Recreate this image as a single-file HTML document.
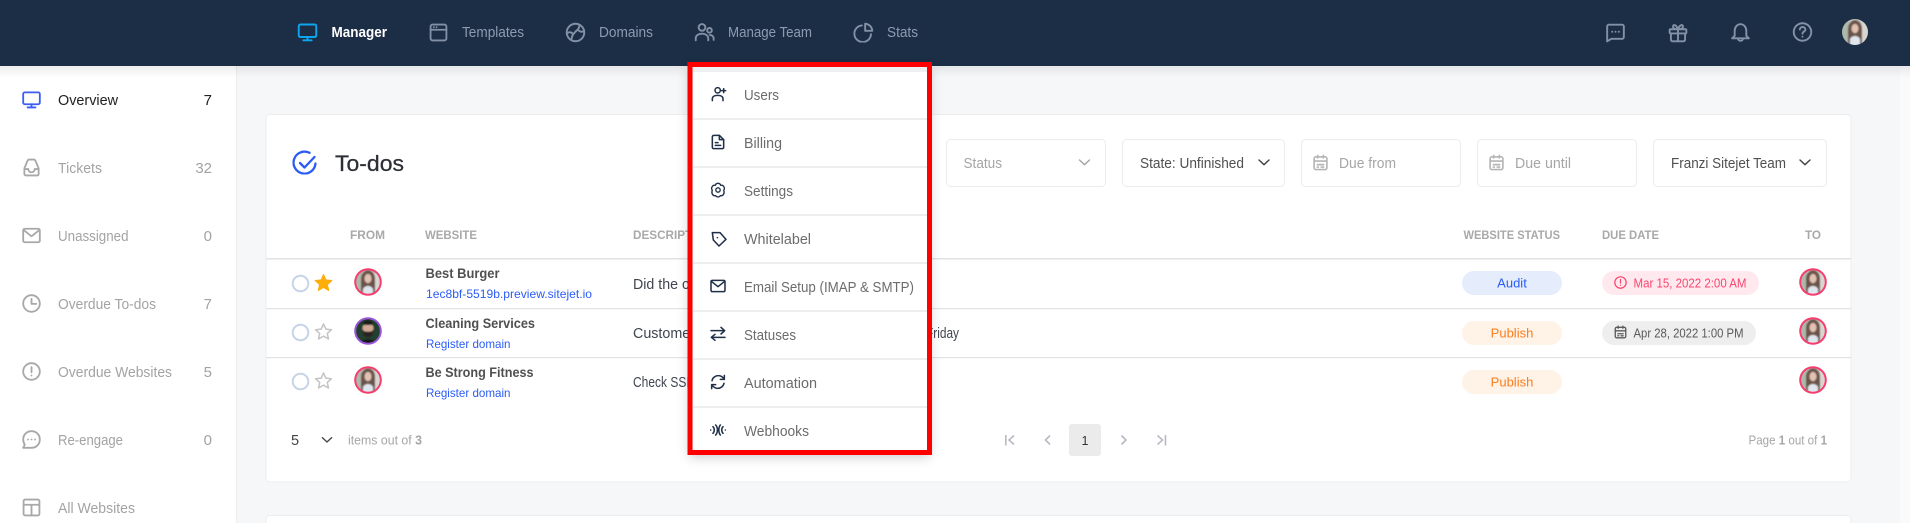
<!DOCTYPE html>
<html lang="en">
<head>
<meta charset="utf-8">
<title>To-dos</title>
<style>
html,body{margin:0;padding:0;background:#f6f7f9;width:1910px;height:523px;overflow:hidden}
svg{display:block}
text{font-family:"Liberation Sans",sans-serif;font-size:14px}
.nav{fill:#8c9bb0;font-size:14.5px}
.side{fill:#a3a3a3;font-size:15px}
.th{fill:#a9a9a9;font-size:11.5px;font-weight:bold}
.name{fill:#505050;font-size:14px;font-weight:bold}
.link{fill:#2a5cf5;font-size:12px}
.desc{fill:#3f4550;font-size:14.5px}
.menu{fill:#6c6c6c;font-size:14.5px}
.ph{fill:#a6a6a6;font-size:14.5px}
.val{fill:#505050;font-size:14.5px}
.ic{fill:none;stroke:currentColor;stroke-width:2.3;stroke-linecap:round;stroke-linejoin:round}
</style>
</head>
<body>
<svg xmlns="http://www.w3.org/2000/svg" width="1910" height="523" viewBox="0 0 1910 523">
<defs>
<linearGradient id="hs" x1="0" y1="0" x2="0" y2="1"><stop offset="0" stop-color="#000" stop-opacity=".07"/><stop offset="1" stop-color="#000" stop-opacity="0"/></linearGradient>
<filter id="soft" x="-20%" y="-20%" width="140%" height="140%"><feGaussianBlur stdDeviation=".7"/></filter>
<clipPath id="c27"><circle cx="0" cy="0" r="11.8"/></clipPath>
<clipPath id="c26"><circle cx="0" cy="0" r="13"/></clipPath>
<g id="woman">
<g filter="url(#soft)">
<rect x="-15" y="-15" width="30" height="30" fill="#c9cac6"/>
<rect x="-15" y="-15" width="9" height="30" fill="#aeb8ab"/>
<rect x="7" y="-15" width="8" height="30" fill="#d9d6d2"/>
<path d="M-7 14V-3C-7-9-3-12 0-12S7-9 7-3V14Z" fill="#6b5248"/>
<ellipse cx="0" cy="-3.500" rx="3.500" ry="4.600" fill="#e2c3b3"/>
<path d="M-5 15V7C-3 3 3 3 5 7V15Z" fill="#dfe6ee"/>
</g>
</g>
<g id="man">
<g filter="url(#soft)">
<rect x="-15" y="-15" width="30" height="30" fill="#24402f"/>
<path d="M-10 15C-9 6 9 6 10 15Z" fill="#15181c"/>
<ellipse cx="0" cy="-2" rx="5.500" ry="7" fill="#d3ab96"/>
<path d="M-5.500-7C-4-12 4-12 5.500-7L4-6H-4Z" fill="#1a1a1a"/>
<path d="M-5.500-2C-4 1-2 .5 0 .5S4 1 5.500-2C5.500 5 2 6.500 0 6.500S-5.500 5-5.500-2Z" fill="#2a2320"/>
</g>
</g>
<g id="av1"><circle r="13.800" fill="#f73d6d"/><g clip-path="url(#c27)"><use href="#woman"/></g></g>
<g id="av2"><circle r="13.800" fill="#9a55d8"/><g clip-path="url(#c27)"><use href="#man"/></g></g>
<symbol id="i-mon" viewBox="0 0 24 24"><g class="ic"><rect x="1.500" y="3" width="21" height="15" rx="2"/><path d="M7 22H17M12 18V22"/></g></symbol>
<symbol id="i-tmpl" viewBox="0 0 24 24"><g class="ic"><rect x="2" y="2" width="20" height="20" rx="2.500"/><path d="M2 8.500H22"/><path d="M6 5.300H6.100M9.500 5.300H9.600" /></g></symbol>
<symbol id="i-globe" viewBox="0 0 24 24"><g class="ic"><circle cx="12" cy="12" r="10.500"/><path d="M17 3C16 8 15 8 12 11S8 15 7 21"/><path d="M2 13C4 11 7 11 9 14M15 9C17 11 20 12 22 10"/></g></symbol>
<symbol id="i-team" viewBox="0 0 24 24"><g class="ic"><circle cx="9" cy="6.500" r="4"/><path d="M1.500 22V19.500C1.500 16 5 14 9 14S16.500 16 16.500 19.500V22"/><circle cx="18" cy="10" r="2.800"/><path d="M18.500 15.500C21 15.700 23 17.500 23 20V21.500"/></g></symbol>
<symbol id="i-pie" viewBox="0 0 24 24"><g class="ic"><path d="M10 3.500A10 10 0 1 0 21 14"/><path d="M14 1.500A9 9 0 0 1 22.500 10H14Z"/></g></symbol>
<symbol id="i-inbox" viewBox="0 0 24 24"><g class="ic"><path d="M3 13L7 3.500C7.500 2.500 8 2 9 2H15C16 2 16.500 2.500 17 3.500L21 13V20C21 21.500 20 22 19 22H5C4 22 3 21.500 3 20Z"/><path d="M3 14H8C8 17 10 18 12 18S16 17 16 14H21"/></g></symbol>
<symbol id="i-mail" viewBox="0 0 24 24"><g class="ic"><rect x="1.500" y="3.500" width="21" height="17" rx="2"/><path d="M2 5L12 13L22 5"/></g></symbol>
<symbol id="i-clock" viewBox="0 0 24 24"><g class="ic"><circle cx="12" cy="12" r="10.500"/><path d="M12 6V12.500H18"/></g></symbol>
<symbol id="i-alert" viewBox="0 0 24 24"><g class="ic"><circle cx="12" cy="12" r="10.500"/><path d="M12 6.500V13M12 17V17.100"/></g></symbol>
<symbol id="i-chat" viewBox="0 0 24 24"><g class="ic"><path d="M12 1.500C18 1.500 22.500 6 22.500 12S18 22.500 12 22.500H1.500L3.500 18.500C2.200 16.500 1.500 14.500 1.500 12C1.500 6 6 1.500 12 1.500Z"/><path d="M7.500 12H7.600M12 12H12.100M16.500 12H16.600"/></g></symbol>
<symbol id="i-chat2" viewBox="0 0 24 24"><g class="ic"><path d="M2 4C2 3 3 2 4 2H20C21 2 22 3 22 4V17C22 18 21 19 20 19H7L2 22Z"/><path d="M8 10.500H8.100M12 10.500H12.100M16 10.500H16.100"/></g></symbol>
<symbol id="i-layout" viewBox="0 0 24 24"><g class="ic"><rect x="2" y="2" width="20" height="20" rx="2"/><path d="M2 8.500H22M12 8.500V22"/></g></symbol>
<symbol id="i-cal" viewBox="0 0 24 24"><g class="ic"><rect x="3" y="4" width="18" height="18" rx="2.500"/><path d="M3 10H21M8 2V5.500M16 2V5.500M7.500 15H16.500M7.500 18.500H9M13 18.500H16.500" /></g></symbol>
<symbol id="i-gift" viewBox="0 0 24 24"><g class="ic"><rect x="2" y="7.500" width="20" height="5" rx="1"/><path d="M3.500 12.500V20C3.500 21 4.500 22 5.500 22H18.500C19.500 22 20.500 21 20.500 20V12.500M12 7.500V22"/><path d="M12 7.500C10 2 6 1 6 4.500C6 6.500 8 7.500 12 7.500C16 7.500 18 6.500 18 4.500C18 1 14 2 12 7.500Z"/></g></symbol>
<symbol id="i-bell" viewBox="0 0 24 24"><g class="ic"><path d="M5 16V10C5 5.500 8 2 12 2S19 5.500 19 10V16L22 19H2Z"/><path d="M9 19C9 23 15 23 15 19"/></g></symbol>
<symbol id="i-help" viewBox="0 0 24 24"><g class="ic"><circle cx="12" cy="12" r="10.500"/><path d="M8.800 9C9 7 10.500 6 12 6C14 6 15.500 7.200 15.500 9C15.500 11.500 12 11.500 12 14M12 17.500V17.600"/></g></symbol>
<symbol id="i-uplus" viewBox="0 0 24 24"><g class="ic"><circle cx="10" cy="6.500" r="4"/><path d="M2 22V19C2 16 5 14 10 14S18 16 18 19V22M19 4V10M16 7H22"/></g></symbol>
<symbol id="i-doc" viewBox="0 0 24 24"><g class="ic"><path d="M14 2H6C4.500 2 3.500 3 3.500 4.500V20C3.500 21 4.500 22 6 22H18C19.500 22 20.500 21 20.500 20V8.500Z"/><path d="M14 2V8.500H20.500M8 13H12M8 17H16"/></g></symbol>
<symbol id="i-flower" viewBox="0 0 24 24"><g fill="none" stroke="currentColor" stroke-width="2" stroke-linecap="round" stroke-linejoin="round"><path d="M8 5C9 1 15 1 16 5C19.500 4 23.500 8.500 20.500 12.500C22.500 16 20 21.500 15.500 20.500C14 23 10 23 8.500 20.500C4 21.500 1.500 16 3.500 12.500C.5 8.500 4.500 4 8 5Z"/><circle cx="12" cy="12" r="3.300"/></g></symbol>
<symbol id="i-tag" viewBox="0 0 24 24"><g class="ic"><path d="M2 2.500H13.500L22.500 12.500L12 22.500L3.500 13.500Z"/><path d="M9.500 10H9.600"/></g></symbol>
<symbol id="i-arr" viewBox="0 0 24 24"><g class="ic"><path d="M1.500 7H22M16.500 2L22 7L16.500 12"/><path d="M22.500 17H2M7.500 12.500L2 17L7.500 21.500"/></g></symbol>
<symbol id="i-sync" viewBox="0 0 24 24"><g class="ic"><path d="M3 10C4 5.500 8 2.500 12.500 2.500C16 2.500 19 4.500 21 7.500M21.500 2V8H15.500"/><path d="M21 14C20 18.500 16 21.500 11.500 21.500C8 21.500 5 19.500 3 16.500M2.500 22V16H8.500"/></g></symbol>
<symbol id="i-hook" viewBox="0 0 24 24"><g class="ic"><path d="M1 12H1.100M23 12H23.100M4.500 7C7 9.500 7 14.500 4.500 17M8.500 4.500C12 8 12 16 8.500 19.500M19.500 7C17 9.500 17 14.500 19.500 17M15.500 4.500C12.500 8 12.500 16 15.500 19.500"/></g></symbol>
<symbol id="i-chev" viewBox="0 0 24 24"><g class="ic"><path d="M4 8L12 15.500L20 8"/></g></symbol>
<symbol id="i-check" viewBox="0 0 24 24"><g class="ic"><path d="M17 2.300A11 11 0 1 0 23 13"/><path d="M7.500 12.500L12 17L22 6.500"/></g></symbol>
<symbol id="i-star" viewBox="0 0 24 24"><path d="M12 2L15 8.800L22.500 9.600L16.900 14.600L18.500 22L12 18.200L5.500 22L7.100 14.600L1.500 9.600L9 8.800Z" fill="currentColor" stroke="currentColor" stroke-linejoin="round" stroke-width="1.400"/></symbol>
<symbol id="i-star0" viewBox="0 0 24 24"><path d="M12 2.500L15 9L22 9.800L16.800 14.500L18.300 21.500L12 17.800L5.700 21.500L7.200 14.500L2 9.800L9 9Z" fill="none" stroke="currentColor" stroke-linejoin="round" stroke-width="1.900"/></symbol>
</defs>

<rect width="1910" height="523" fill="#f6f7f9"/>
<rect x="1900" y="66" width="10" height="457" fill="#fafafa"/>

<!-- Sidebar -->
<rect x="0" y="66" width="236" height="457" fill="#fff"/>
<rect x="236" y="66" width="1" height="457" fill="#ececec"/>
<g color="#3a5df5"><use href="#i-mon" x="22" y="90" width="19" height="19"/></g>
<g color="#a8a8a8">
<use href="#i-inbox" x="22" y="158" width="19" height="19"/>
<use href="#i-mail" x="22" y="226" width="19" height="19"/>
<use href="#i-clock" x="22" y="294" width="19" height="19"/>
<use href="#i-alert" x="22" y="362" width="19" height="19"/>
<use href="#i-chat" x="22" y="430" width="19" height="19"/>
<use href="#i-layout" x="22" y="498" width="19" height="19"/>
</g>
<text class="side" x="58" y="105" textLength="60" lengthAdjust="spacingAndGlyphs" style="fill:#222">Overview</text>
<text class="side" x="58" y="173" textLength="44" lengthAdjust="spacingAndGlyphs">Tickets</text>
<text class="side" x="58" y="241" textLength="70.500" lengthAdjust="spacingAndGlyphs">Unassigned</text>
<text class="side" x="58" y="309" textLength="98" lengthAdjust="spacingAndGlyphs">Overdue To-dos</text>
<text class="side" x="58" y="377" textLength="114" lengthAdjust="spacingAndGlyphs">Overdue Websites</text>
<text class="side" x="58" y="445" textLength="65" lengthAdjust="spacingAndGlyphs">Re-engage</text>
<text class="side" x="58" y="513" textLength="77" lengthAdjust="spacingAndGlyphs">All Websites</text>
<g text-anchor="end">
<text class="side" x="212" y="105" style="fill:#222">7</text>
<text class="side" x="212" y="173">32</text>
<text class="side" x="212" y="241">0</text>
<text class="side" x="212" y="309">7</text>
<text class="side" x="212" y="377">5</text>
<text class="side" x="212" y="445">0</text>
</g>

<!-- Card -->
<rect x="266" y="114.500" width="1585" height="367.500" rx="4" fill="#fff" stroke="#ededed"/>
<rect x="266" y="515.500" width="1585" height="20" rx="4" fill="#fff" stroke="#ededed"/>
<g color="#2a5cf5"><use href="#i-check" x="292.500" y="150.500" width="24" height="24"/></g>
<text x="335" y="171" textLength="69" lengthAdjust="spacingAndGlyphs" style="font-size:22px;fill:#2c2f36;stroke:#2c2f36;stroke-width:.25px">To-dos</text>

<!-- Filters -->
<g fill="#fff" stroke="#ececec">
<rect x="946.500" y="139.500" width="159" height="47" rx="4"/>
<rect x="1122.500" y="139.500" width="162" height="47" rx="4"/>
<rect x="1301.500" y="139.500" width="159" height="47" rx="4"/>
<rect x="1477.500" y="139.500" width="159" height="47" rx="4"/>
<rect x="1653.500" y="139.500" width="173" height="47" rx="4"/>
</g>
<text class="ph" x="963.500" y="168" textLength="38.500" lengthAdjust="spacingAndGlyphs">Status</text>
<g color="#a6a6a6"><use href="#i-chev" x="1077" y="155" width="15" height="15"/></g>
<text class="val" x="1140" y="168" textLength="104" lengthAdjust="spacingAndGlyphs">State: Unfinished</text>
<g color="#444"><use href="#i-chev" x="1256.500" y="155" width="15" height="15"/></g>
<g color="#b5b5b5"><use href="#i-cal" x="1312" y="154" width="17" height="17"/><use href="#i-cal" x="1488" y="154" width="17" height="17"/></g>
<text class="ph" x="1339" y="168" textLength="57" lengthAdjust="spacingAndGlyphs">Due from</text>
<text class="ph" x="1515" y="168" textLength="56" lengthAdjust="spacingAndGlyphs">Due until</text>
<text class="val" x="1671" y="168" textLength="115" lengthAdjust="spacingAndGlyphs">Franzi Sitejet Team</text>
<g color="#444"><use href="#i-chev" x="1797.500" y="155" width="15" height="15"/></g>

<!-- Table header -->
<text class="th" x="350" y="239" textLength="35" lengthAdjust="spacingAndGlyphs">FROM</text>
<text class="th" x="425" y="239" textLength="52" lengthAdjust="spacingAndGlyphs">WEBSITE</text>
<text class="th" x="633" y="239" textLength="80" lengthAdjust="spacingAndGlyphs">DESCRIPTION</text>
<text class="th" x="1463.500" y="239" textLength="96.500" lengthAdjust="spacingAndGlyphs">WEBSITE STATUS</text>
<text class="th" x="1602" y="239" textLength="57" lengthAdjust="spacingAndGlyphs">DUE DATE</text>
<text class="th" x="1805" y="239" textLength="16" lengthAdjust="spacingAndGlyphs">TO</text>
<rect x="266" y="258" width="1585" height="1.500" fill="#e2e2e2"/>
<rect x="266" y="308" width="1585" height="1.200" fill="#e2e2e2"/>
<rect x="266" y="357" width="1585" height="1.200" fill="#e2e2e2"/>

<!-- Rows -->
<g fill="none" stroke="#c7d4e6" stroke-width="2">
<circle cx="300.500" cy="283.500" r="7.800"/>
<circle cx="300.500" cy="332.500" r="7.800"/>
<circle cx="300.500" cy="381.500" r="7.800"/>
</g>
<g color="#ffad0a"><use href="#i-star" x="314" y="273" width="19" height="19"/></g>
<g color="#c4c4c4"><use href="#i-star0" x="314" y="322" width="19" height="19"/><use href="#i-star0" x="314" y="371" width="19" height="19"/></g>
<use href="#av1" x="368" y="282"/>
<use href="#av2" x="368" y="331"/>
<use href="#av1" x="368" y="380"/>

<text class="name" x="425.500" y="278" textLength="74" lengthAdjust="spacingAndGlyphs">Best Burger</text>
<text class="link" x="426" y="298" textLength="166" lengthAdjust="spacingAndGlyphs">1ec8bf-5519b.preview.sitejet.io</text>
<text class="name" x="425.500" y="328" textLength="109.500" lengthAdjust="spacingAndGlyphs">Cleaning Services</text>
<text class="link" x="426" y="348" textLength="84.500" lengthAdjust="spacingAndGlyphs">Register domain</text>
<text class="name" x="425.500" y="377" textLength="108" lengthAdjust="spacingAndGlyphs">Be Strong Fitness</text>
<text class="link" x="426" y="397" textLength="84.500" lengthAdjust="spacingAndGlyphs">Register domain</text>

<text class="desc" x="633" y="289" textLength="64" lengthAdjust="spacingAndGlyphs">Did the cu</text>
<text class="desc" x="633" y="338" textLength="62" lengthAdjust="spacingAndGlyphs">Customer</text>
<text class="desc" x="633" y="387" textLength="60" lengthAdjust="spacingAndGlyphs">Check SSL</text>
<text class="desc" x="926" y="338" textLength="33" lengthAdjust="spacingAndGlyphs">Friday</text>

<!-- Status pills -->
<rect x="1462" y="271" width="100" height="24" rx="12" fill="#e5edfd"/>
<rect x="1462" y="321" width="100" height="24" rx="12" fill="#fff2e7"/>
<rect x="1462" y="370" width="100" height="24" rx="12" fill="#fff2e7"/>
<text x="1512" y="287.500" text-anchor="middle" style="font-size:13px;fill:#2a5cf5">Audit</text>
<text x="1512" y="337.500" text-anchor="middle" style="font-size:13px;fill:#fb7d1e">Publish</text>
<text x="1512" y="386.500" text-anchor="middle" style="font-size:13px;fill:#fb7d1e">Publish</text>

<rect x="1602" y="271" width="157" height="24" rx="12" fill="#ffe9ef"/>
<rect x="1602" y="321" width="154" height="24" rx="12" fill="#eeeeee"/>
<g color="#f7466f"><use href="#i-alert" x="1614" y="276" width="13" height="13"/></g>
<g color="#5a5a5a"><use href="#i-cal" x="1613.500" y="325" width="14" height="14"/></g>
<text x="1633.500" y="287.500" textLength="113" lengthAdjust="spacingAndGlyphs" style="font-size:12.500px;fill:#f7466f">Mar 15, 2022 2:00 AM</text>
<text x="1633.500" y="337.500" textLength="110" lengthAdjust="spacingAndGlyphs" style="font-size:12.500px;fill:#5a5a5a">Apr 28, 2022 1:00 PM</text>

<use href="#av1" x="1813" y="282"/>
<use href="#av1" x="1813" y="331"/>
<use href="#av1" x="1813" y="380"/>

<!-- Footer -->
<text x="291" y="445" style="font-size:14.500px;fill:#444">5</text>
<g color="#444"><use href="#i-chev" x="320" y="433" width="14" height="14"/></g>
<text x="348" y="444.500" textLength="74" lengthAdjust="spacingAndGlyphs" style="font-size:12.500px;fill:#a6a6a6">items out of <tspan font-weight="bold">3</tspan></text>
<rect x="1069" y="424" width="32" height="32" rx="3" fill="#ebebeb"/>
<text x="1085" y="445" text-anchor="middle" style="font-size:12.500px;fill:#333">1</text>
<g fill="none" stroke="#b7bac4" stroke-width="1.600">
<path d="M1005.800 435V445.500M1014 435.500L1009 440L1014 444.500"/>
<path d="M1050 435.500L1045.500 440L1050 444.500"/>
<path d="M1121.500 435.500L1126 440L1121.500 444.500"/>
<path d="M1157.500 435.500L1162.500 440L1157.500 444.500M1165.500 435V445.500"/>
</g>
<text x="1748.500" y="444.500" textLength="78.500" lengthAdjust="spacingAndGlyphs" style="font-size:12.500px;fill:#a6a6a6">Page <tspan font-weight="bold">1</tspan> out of <tspan font-weight="bold">1</tspan></text>

<!-- Header -->
<rect x="0" y="66" width="1910" height="12" fill="url(#hs)"/>
<rect x="0" y="0" width="1910" height="66" fill="#1c2e45"/>
<g color="#0ea5f0"><use href="#i-mon" x="297.500" y="22" width="20" height="20"/></g>
<g color="#8291a6">
<use href="#i-tmpl" x="429" y="23" width="19" height="19"/>
<use href="#i-globe" x="565.500" y="22.500" width="20" height="20"/>
<use href="#i-team" x="694.500" y="22" width="20" height="20"/>
<use href="#i-pie" x="853.500" y="22.500" width="20" height="20"/>
<use href="#i-chat2" x="1605.500" y="23" width="20" height="20"/>
<use href="#i-gift" x="1668" y="23" width="20" height="20"/>
<use href="#i-bell" x="1730.500" y="22.500" width="20" height="20"/>
<use href="#i-help" x="1792.500" y="22" width="20" height="20"/>
</g>
<text x="331.500" y="37" textLength="55.500" lengthAdjust="spacingAndGlyphs" style="font-size:14.500px;font-weight:bold;fill:#fff">Manager</text>
<text class="nav" x="462" y="37" textLength="62" lengthAdjust="spacingAndGlyphs">Templates</text>
<text class="nav" x="599" y="37" textLength="54" lengthAdjust="spacingAndGlyphs">Domains</text>
<text class="nav" x="728" y="37" textLength="84" lengthAdjust="spacingAndGlyphs">Manage Team</text>
<text class="nav" x="887" y="37" textLength="31" lengthAdjust="spacingAndGlyphs">Stats</text>
<g transform="translate(1855 32)"><g clip-path="url(#c26)"><use href="#woman"/></g></g>

<!-- Dropdown -->
<rect x="689.500" y="64.500" width="240" height="388" fill="#eeeff1" style="filter:drop-shadow(0 4px 6px rgba(0,0,0,.22))"/>
<rect x="693" y="72" width="234" height="378" fill="#fff"/>
<g fill="#eeeeee">
<rect x="693" y="118" width="234" height="2"/>
<rect x="693" y="166" width="234" height="2"/>
<rect x="693" y="214" width="234" height="2"/>
<rect x="693" y="262" width="234" height="2"/>
<rect x="693" y="310" width="234" height="2"/>
<rect x="693" y="358" width="234" height="2"/>
<rect x="693" y="406" width="234" height="2"/>
</g>
<g color="#1f3048">
<use href="#i-uplus" x="711" y="86" width="16" height="16"/>
<use href="#i-doc" x="710" y="134" width="16" height="16"/>
<use href="#i-flower" x="710" y="182" width="16" height="16"/>
<use href="#i-tag" x="711" y="231" width="16" height="16"/>
<use href="#i-mail" x="710" y="278" width="16" height="16"/>
<use href="#i-arr" x="710" y="326" width="16" height="16"/>
<use href="#i-sync" x="710" y="374" width="16" height="16"/>
<use href="#i-hook" x="710" y="422" width="16" height="16"/>
</g>
<text class="menu" x="744" y="100" textLength="35" lengthAdjust="spacingAndGlyphs">Users</text>
<text class="menu" x="744" y="148" textLength="38" lengthAdjust="spacingAndGlyphs">Billing</text>
<text class="menu" x="744" y="196" textLength="49" lengthAdjust="spacingAndGlyphs">Settings</text>
<text class="menu" x="744" y="244" textLength="67" lengthAdjust="spacingAndGlyphs">Whitelabel</text>
<text class="menu" x="744" y="292" textLength="170" lengthAdjust="spacingAndGlyphs">Email Setup (IMAP &amp; SMTP)</text>
<text class="menu" x="744" y="340" textLength="52" lengthAdjust="spacingAndGlyphs">Statuses</text>
<text class="menu" x="744" y="388" textLength="73" lengthAdjust="spacingAndGlyphs">Automation</text>
<text class="menu" x="744" y="436" textLength="65" lengthAdjust="spacingAndGlyphs">Webhooks</text>
<rect x="690" y="64.500" width="239.500" height="388" fill="none" stroke="#ff0000" stroke-width="5"/>
</svg>
</body>
</html>
